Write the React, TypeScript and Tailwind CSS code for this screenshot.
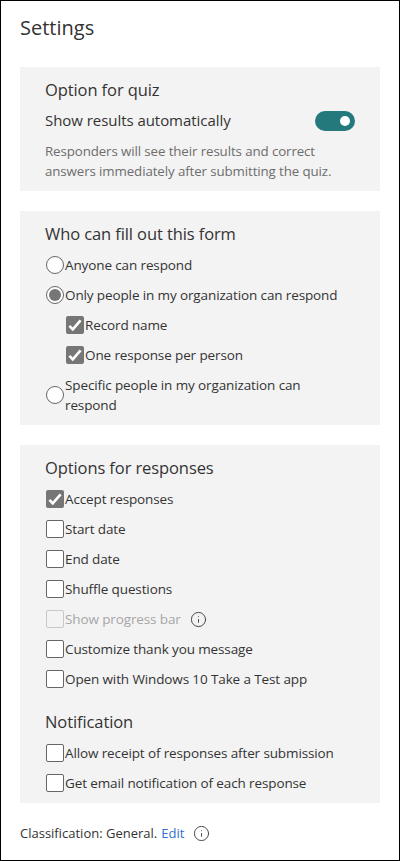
import { Info } from "lucide-react";

const font = { sans: "font-['Open_Sans','Noto_Sans',sans-serif]" };

function Radio({ checked }: { checked?: boolean }) {
  return (
    <span className="flex h-[18px] w-[18px] shrink-0 items-center justify-center rounded-full border border-[#666] bg-white">
      {checked && <span className="h-3 w-3 rounded-full bg-[#767676]" />}
    </span>
  );
}

function Box({ checked, disabled }: { checked?: boolean; disabled?: boolean }) {
  if (checked) {
    return (
      <span className="h-[18px] w-[18px] shrink-0 rounded-[2px] bg-[#767676]">
        <svg viewBox="0 0 18 18" width="18" height="18" fill="none">
          <path d="M3.4 9.8 L6.8 13.4 L14.6 4.4" stroke="#fff" strokeWidth="2.6" />
        </svg>
      </span>
    );
  }
  return (
    <span
      className={`h-[18px] w-[18px] shrink-0 rounded-[2px] border ${
        disabled ? "border-[#c8c8c8] bg-[#f3f3f3]" : "border-[#666] bg-white"
      }`}
    />
  );
}

function Row({
  label,
  control,
  muted,
  children,
}: {
  label: string;
  control: React.ReactNode;
  muted?: boolean;
  children?: React.ReactNode;
}) {
  return (
    <div className="flex h-[30px] items-center gap-px">
      {control}
      <span
        className={`whitespace-nowrap text-[13.5px] tracking-[-0.12px] ${
          muted ? "text-[#a6a6a6]" : "text-[#333]"
        }`}
      >
        {label}
      </span>
      {children}
    </div>
  );
}

function Heading({ children }: { children: React.ReactNode }) {
  return <h3 className="text-[16.5px] leading-[22px] tracking-[-0.1px] text-[#333]">{children}</h3>;
}

export default function App() {
  return (
    <div className={`h-[861px] w-[400px] overflow-hidden border border-black bg-white ${font.sans}`}>
      <div className="px-[19px]">
        <h2 className="pt-[13px] text-[20px] leading-[27px] text-[#333]">Settings</h2>

        <section className="mt-[26px] h-[124px] bg-[#f3f3f3] px-[25px] pt-[12px]">
          <Heading>Option for quiz</Heading>
          <div className="mt-[9px] flex items-center justify-between">
            <span className="text-[15px] leading-[20px] tracking-[-0.05px] text-[#333]">
              Show results automatically
            </span>
            <span className="flex h-5 w-10 translate-y-px items-center justify-end rounded-full bg-[#24797c] pr-[5px]">
              <span className="h-2.5 w-2.5 rounded-full bg-white" />
            </span>
          </div>
          <p className="mt-[11px] whitespace-nowrap text-[13.3px] leading-[20px] tracking-[-0.1px] text-[#6d6d6d]">
            Responders will see their results and correct
            <br />
            answers immediately after submitting the quiz.
          </p>
        </section>

        <section className="mt-5 h-[214px] bg-[#f3f3f3] px-[26px] pt-3">
          <div className="-ml-px">
            <Heading>Who can fill out this form</Heading>
          </div>
          <div className="mt-[5px]">
            <Row label="Anyone can respond" control={<Radio />} />
            <Row label="Only people in my organization can respond" control={<Radio checked />} />
            <div className="pl-5">
              <Row label="Record name" control={<Box checked />} />
              <Row label="One response per person" control={<Box checked />} />
            </div>
            <div className="mt-[5px] flex items-center gap-px">
              <Radio />
              <span className="max-w-[270px] text-[13.5px] leading-[20px] tracking-[-0.12px] text-[#333]">
                Specific people in my organization can respond
              </span>
            </div>
          </div>
        </section>

        <section className="mt-5 h-[358px] bg-[#f3f3f3] px-[26px] pt-3">
          <div className="-ml-px">
            <Heading>Options for responses</Heading>
          </div>
          <div className="mt-[5px]">
            <Row label="Accept responses" control={<Box checked />} />
            <Row label="Start date" control={<Box />} />
            <Row label="End date" control={<Box />} />
            <Row label="Shuffle questions" control={<Box />} />
            <Row label="Show progress bar" control={<Box disabled />} muted>
              <Info size={17} strokeWidth={1.25} className="ml-[8px] text-[#333]" />
            </Row>
            <Row label="Customize thank you message" control={<Box />} />
            <Row label="Open with Windows 10 Take a Test app" control={<Box />} />
          </div>
          <div className="-ml-px mt-[17px]">
            <Heading>Notification</Heading>
          </div>
          <div className="mt-[5px]">
            <Row label="Allow receipt of responses after submission" control={<Box />} />
            <Row label="Get email notification of each response" control={<Box />} />
          </div>
        </section>

        <div className="mt-5 flex items-center text-[13px] leading-5 text-[#333]">
          <span>Classification: General.</span>
          <span className="ml-1 text-[#2f6fd0]">Edit</span>
          <Info size={17} strokeWidth={1.25} className="ml-[9px]" />
        </div>
      </div>
    </div>
  );
}
